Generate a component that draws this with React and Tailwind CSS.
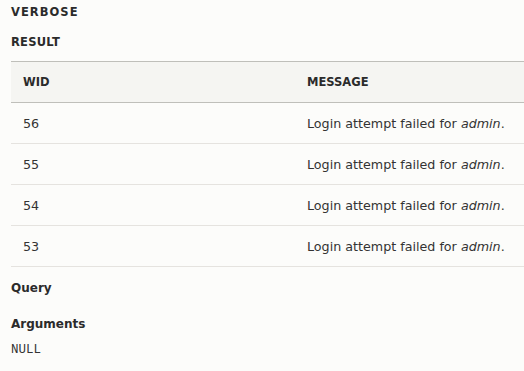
import React from 'react';

const ROWS = ['56', '55', '54', '53'];

export default function App() {
  return (
    <div className="w-[524px] h-[371px] overflow-hidden bg-[#fcfcfa] text-[#333] font-['DejaVu_Sans',sans-serif] pl-[11px]">
      <div className="pt-[6px] text-[11.5px] font-bold tracking-[0.09em] leading-[13px] text-[#2b2b2b]">VERBOSE</div>
      <div className="mt-[17px] text-[11.5px] font-bold tracking-[0.02em] leading-[13px] text-[#2b2b2b]">RESULT</div>

      <table className="mt-[12px] w-[520px] border-collapse text-[12.7px]">
        <thead>
          <tr className="bg-[#f5f5f2] border-t border-b border-[#bfbfba]">
            <th className="w-[284px] h-[41px] pl-[12px] pt-[1px] text-left text-[11.5px] font-bold text-[#2b2b2b]">WID</th>
            <th className="h-[41px] pl-[12px] pt-[1px] text-left text-[11.5px] font-bold text-[#2b2b2b]">MESSAGE</th>
          </tr>
        </thead>
        <tbody>
          {ROWS.map(id => (
            <tr key={id} className="border-b border-[#e5e3df]">
              <td className="h-[41px] pl-[12px] pt-[1px]">{id}</td>
              <td className="h-[41px] pl-[12px] pt-[1px]">Login attempt failed for <em>admin</em>.</td>
            </tr>
          ))}
        </tbody>
      </table>

      <div className="mt-[14px] text-[12px] font-bold leading-[14px] text-[#2b2b2b]">Query</div>
      <div className="mt-[22px] text-[12px] font-bold leading-[14px] text-[#2b2b2b]">Arguments</div>
      <div className="mt-[13px] text-[12.5px] leading-[13px] font-['Liberation_Mono',monospace]">NULL</div>
    </div>
  );
}
